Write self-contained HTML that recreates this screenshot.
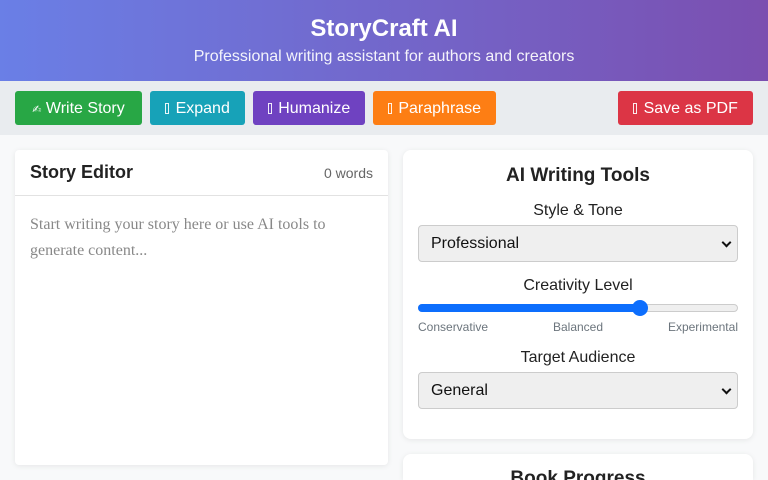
<!DOCTYPE html>
<html><head><meta charset="utf-8"><style>
*{box-sizing:border-box;margin:0;padding:0}
html,body{width:768px;height:480px;overflow:hidden}
body{background:#f8f9fa;font-family:"Liberation Sans",sans-serif;color:#222;position:relative}
.hdr{height:81px;background:linear-gradient(90deg,#6a7fe6,#7b4fb0);color:#fff;text-align:center}
.hdr h1{font-size:24px;font-weight:bold;padding-top:15px;line-height:28px}
.hdr p{font-size:16px;margin-top:5px;opacity:.92}
.bar{height:54px;background:#e9ecef;position:relative}
.b{position:absolute;top:10px;height:34px;border-radius:3px;color:#fff;font-size:16px;line-height:36px;text-align:center}
.bx{display:inline-block;width:4px;height:11px;border:1px solid #fff;vertical-align:-1px;margin-right:2px;opacity:.9}
.ic{font-family:"DejaVu Sans",sans-serif;font-size:11px;font-variant-emoji:text}
.card{position:absolute;background:#fff;border-radius:8px;box-shadow:0 1px 6px rgba(0,0,0,.08)}
.lab{text-align:center;font-size:16px;color:#222}
.sel{position:absolute;left:15px;width:320px;height:37px;background:#efefef;border:1px solid #ccc;border-radius:4px;font-size:16px;line-height:35px;padding-left:12px;color:#111}
.sel:after{content:"";position:absolute;right:7px;top:13px;width:5px;height:5px;border-right:2px solid #111;border-bottom:2px solid #111;transform:rotate(45deg)}
</style></head><body>
<div class="hdr"><h1>StoryCraft AI</h1><p>Professional writing assistant for authors and creators</p></div>
<div class="bar">
<div class="b" style="left:15px;width:127px;background:#28a745"><span class="ic">&#x270D;&#xFE0E;</span> Write Story</div>
<div class="b" style="left:150px;width:95px;background:#17a2b8"><span class="bx"></span> Expand</div>
<div class="b" style="left:253px;width:112px;background:#6f42c1"><span class="bx"></span> Humanize</div>
<div class="b" style="left:373px;width:123px;background:#fd7e14"><span class="bx"></span> Paraphrase</div>
<div class="b" style="left:618px;width:135px;background:#dc3545"><span class="bx"></span> Save as PDF</div>
</div>
<div class="card" style="left:15px;top:150px;width:373px;height:315px;border-radius:4px">
<div style="height:46px;border-bottom:1px solid #e2e2e2;position:relative">
<div style="position:absolute;left:15px;top:12px;font-size:18px;font-weight:bold">Story Editor</div>
<div style="position:absolute;right:15px;top:15px;font-size:14px;color:#666">0 words</div></div>
<div style="padding:16px 15px;font-family:'Liberation Serif',serif;font-size:16px;line-height:26px;color:#888;width:330px">Start writing your story here or use AI tools to generate content...</div>
</div>
<div class="card" style="left:403px;top:150px;width:350px;height:289px">
<div style="text-align:center;font-size:19px;font-weight:bold;margin-top:15px">AI Writing Tools</div>
<div class="lab" style="position:absolute;top:52px;width:100%">Style &amp; Tone</div>
<div class="sel" style="top:75px">Professional</div>
<div class="lab" style="position:absolute;top:127px;width:100%">Creativity Level</div>
<div style="position:absolute;left:15px;top:154px;width:320px;height:8px;border-radius:4px;background:#efefef;border:1px solid #ccc"></div>
<div style="position:absolute;left:15px;top:154px;width:222px;height:8px;border-radius:4px;background:#0d6efd"></div>
<div style="position:absolute;left:229px;top:150px;width:16px;height:16px;border-radius:50%;background:#0d6efd"></div>
<div style="position:absolute;left:15px;top:170px;width:320px;font-size:12px;color:#6c757d;display:flex;justify-content:space-between"><span>Conservative</span><span>Balanced</span><span>Experimental</span></div>
<div class="lab" style="position:absolute;top:199px;width:100%">Target Audience</div>
<div class="sel" style="top:222px">General</div>
</div>
<div class="card" style="left:403px;top:454px;width:350px;height:26px;border-radius:8px 8px 0 0;overflow:hidden">
<div style="text-align:center;font-size:19px;font-weight:bold;margin-top:14px">Book Progress</div></div>
</body></html>
